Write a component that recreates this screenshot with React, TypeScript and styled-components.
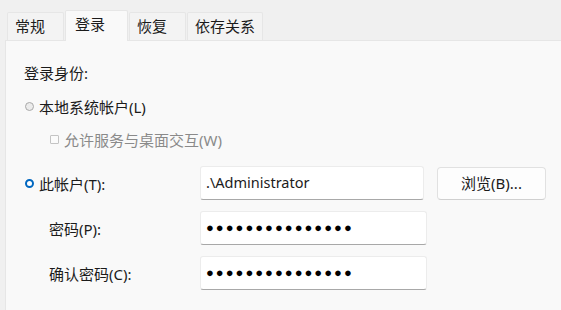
import React from 'react';
import styled, { createGlobalStyle } from 'styled-components';

const GlobalStyle = createGlobalStyle`
    html, body {
        margin: 0;
        padding: 0;
        background: #f0f0f0;
    }
    body {
        font-family: "Noto Sans", "Noto Sans CJK SC", sans-serif;
        color: #1b1b1b;
    }
`;

const Window = styled.div`
    display: flex;
    flex-direction: column;
    width: 561px;
    height: 310px;
    overflow: hidden;
    background: #f0f0f0;
    font-size: 15px;
`;

const TabBar = styled.div`
    display: flex;
    align-items: flex-end;
    height: 40px;
    padding-left: 7px;
    box-sizing: border-box;
`;

const Tab = styled.div<{ $active?: boolean }>`
    display: flex;
    align-items: center;
    box-sizing: border-box;
    height: ${(p) => (p.$active ? 31 : 28)}px;
    min-width: ${(p) => (p.$active ? 63 : 57)}px;
    margin-right: 1px;
    margin-bottom: ${(p) => (p.$active ? -1 : 0)}px;
    padding: ${(p) => (p.$active ? '0 8px 4px 9px' : '0 7px 1px 7px')};
    background: ${(p) => (p.$active ? '#f9f9f9' : '#f3f3f3')};
    border: 1px solid #e6e6e6;
    border-bottom: none;
    border-radius: 2px 2px 0 0;
    position: relative;
    z-index: ${(p) => (p.$active ? 1 : 0)};
    line-height: 1;
`;

const Panel = styled.div`
    flex: 1;
    margin-left: 5px;
    background: #f9f9f9;
    border-top: 1px solid #e6e6e6;
    border-left: 1px solid #e6e6e6;
    padding: 21px 0 0 18px;
    display: flex;
    flex-direction: column;
`;

const Row = styled.div<{ $top?: number; $indent?: number; $disabled?: boolean }>`
    display: flex;
    align-items: center;
    height: 20px;
    margin-top: ${(p) => p.$top ?? 0}px;
    padding-left: ${(p) => p.$indent ?? 0}px;
    color: ${(p) => (p.$disabled ? '#8a8a8a' : 'inherit')};
`;

const Radio = styled.span<{ $checked?: boolean }>`
    display: inline-block;
    box-sizing: border-box;
    width: 9px;
    height: 9px;
    border-radius: 50%;
    margin: 0 5px 0 1px;
    border: ${(p) => (p.$checked ? '2px solid #0067c0' : '1px solid #a9a9a9')};
    background: ${(p) => (p.$checked ? '#ffffff' : '#ececec')};
`;

const Checkbox = styled.span`
    display: inline-block;
    box-sizing: border-box;
    width: 9px;
    height: 9px;
    margin-right: 5px;
    border: 1px solid #c4c4c4;
    border-radius: 1px;
    background: #fbfbfb;
`;

const AccountGrid = styled.div`
    display: grid;
    grid-template-columns: 176px 227px 119px;
    grid-auto-rows: 34px;
    row-gap: 11px;
    margin-top: 17px;
    align-items: center;
`;

const Label = styled.div<{ $indent?: number }>`
    display: flex;
    align-items: center;
    padding-left: ${(p) => p.$indent ?? 0}px;
`;

const Field = styled.div<{ $width: number }>`
    box-sizing: border-box;
    width: ${(p) => p.$width}px;
    height: 34px;
    display: flex;
    align-items: center;
    padding: 0 0 3px 5px;
    background: #ffffff;
    border: 1px solid #ececec;
    border-bottom: 1px solid #a8a8a8;
    border-radius: 3px;
    font-size: 14.5px;
`;

const Dots = styled.span`
    font-family: "Liberation Sans", sans-serif;
    font-size: 13px;
    letter-spacing: 2px;
    color: #000;
    padding-top: 2px;
`;

const Button = styled.div`
    box-sizing: border-box;
    margin-left: 10px;
    width: 109px;
    height: 33px;
    display: flex;
    align-items: center;
    justify-content: center;
    padding-bottom: 2px;
    background: #fdfdfd;
    border: 1px solid #e1e1e1;
    border-bottom-color: #d0d0d0;
    border-radius: 4px;
`;

const PASSWORD = '●'.repeat(15);

export default function App() {
    return (
        <Window>
            <GlobalStyle />
            <TabBar>
                <Tab>常规</Tab>
                <Tab $active>登录</Tab>
                <Tab>恢复</Tab>
                <Tab>依存关系</Tab>
            </TabBar>
            <Panel>
                <Row>登录身份:</Row>
                <Row $top={14}>
                    <Radio />
                    本地系统帐户(L)
                </Row>
                <Row $top={13} $indent={26} $disabled>
                    <Checkbox />
                    允许服务与桌面交互(W)
                </Row>
                <AccountGrid>
                    <Label>
                        <Radio $checked />
                        此帐户(T):
                    </Label>
                    <Field $width={224}>.\Administrator</Field>
                    <Button>浏览(B)...</Button>
                    <Label $indent={25}>密码(P):</Label>
                    <Field $width={227}>
                        <Dots>{PASSWORD}</Dots>
                    </Field>
                    <div />
                    <Label $indent={25}>确认密码(C):</Label>
                    <Field $width={227}>
                        <Dots>{PASSWORD}</Dots>
                    </Field>
                    <div />
                </AccountGrid>
            </Panel>
        </Window>
    );
}
